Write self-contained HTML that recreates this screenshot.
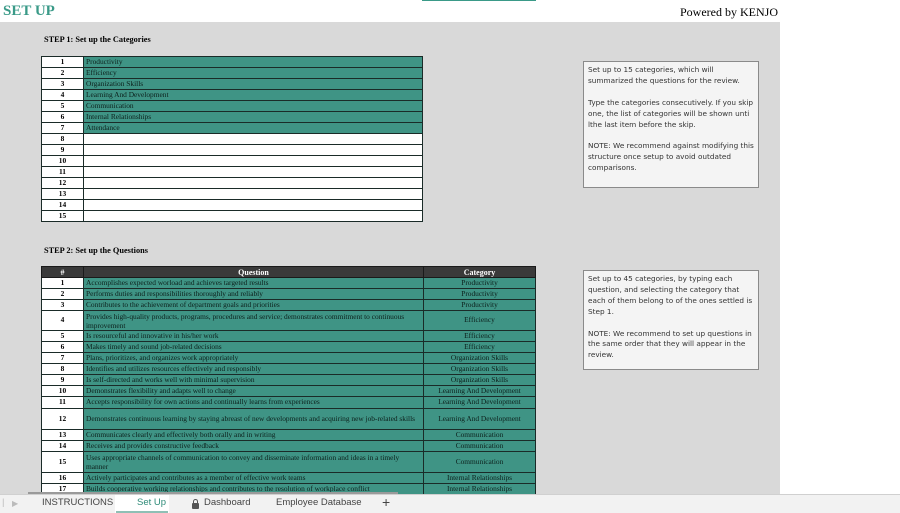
<!DOCTYPE html>
<html><head><meta charset="utf-8"><style>
*{margin:0;padding:0;box-sizing:border-box}
body{width:900px;height:513px;overflow:hidden;background:#fff;position:relative;font-family:"Liberation Serif",serif}
.hdr{position:absolute;left:0;top:0;width:780px;height:22px;background:#fff}
.title{position:absolute;left:3px;top:3px;font-size:15px;font-weight:bold;color:#3a9a88;white-space:nowrap}
.pw{position:absolute;right:2px;top:5px;font-size:12px;color:#000;white-space:nowrap}
.grey{position:absolute;left:0;top:22px;width:780px;height:472px;background:#d9d9d9}
.step{position:absolute;left:44px;font-size:8.3px;font-weight:bold;white-space:nowrap}
table{position:absolute;border-collapse:collapse;table-layout:fixed;font-size:7.4px}
td{border:1px solid #1a2b28;padding:0 2px;line-height:8.5px;overflow:hidden;white-space:nowrap}
td.n{background:#fff;text-align:center;font-weight:bold}
td.t{background:#3f9485;color:#0c1f1b}
td.e{background:#fff}
td.c{background:#3f9485;text-align:center;color:#0c1f1b}
td.w{white-space:normal;line-height:9px}
th{background:#3a3a3a;color:#fff;font-size:8px;border:1px solid #1a1a1a;height:11px}
.note{position:absolute;left:583px;width:176px;background:#f4f4f4;border:1px solid #8a8a8a;font-family:"DejaVu Sans","Liberation Sans",sans-serif;font-size:7.3px;line-height:10.9px;color:#333;padding:3px 4px}
.note p{margin-bottom:10.9px}
.tabs{position:absolute;left:0;top:494px;width:900px;height:19px;background:#f2f2f2;border-top:1px solid #d0d0d0;font-family:"Liberation Sans",sans-serif;font-size:9.5px;color:#444}
.tabs span{position:absolute;top:2px;white-space:nowrap}
</style></head><body>
<div class="hdr"><div class="title">SET UP</div><div class="pw">Powered by KENJO</div></div>
<div style="position:absolute;left:422px;top:0;width:114px;height:1px;background:#3a9a88"></div>
<div class="grey"></div>
<div class="step" style="top:35px">STEP 1: Set up the Categories</div>
<table style="left:41px;top:56px;width:382px">
<colgroup><col style="width:42px"><col></colgroup>
<tr style="height:11px"><td class="n">1</td><td class="t">Productivity</td></tr>
<tr style="height:11px"><td class="n">2</td><td class="t">Efficiency</td></tr>
<tr style="height:11px"><td class="n">3</td><td class="t">Organization Skills</td></tr>
<tr style="height:11px"><td class="n">4</td><td class="t">Learning And Development</td></tr>
<tr style="height:11px"><td class="n">5</td><td class="t">Communication</td></tr>
<tr style="height:11px"><td class="n">6</td><td class="t">Internal Relationships</td></tr>
<tr style="height:11px"><td class="n">7</td><td class="t">Attendance</td></tr>
<tr style="height:11px"><td class="n">8</td><td class="e"></td></tr>
<tr style="height:11px"><td class="n">9</td><td class="e"></td></tr>
<tr style="height:11px"><td class="n">10</td><td class="e"></td></tr>
<tr style="height:11px"><td class="n">11</td><td class="e"></td></tr>
<tr style="height:11px"><td class="n">12</td><td class="e"></td></tr>
<tr style="height:11px"><td class="n">13</td><td class="e"></td></tr>
<tr style="height:11px"><td class="n">14</td><td class="e"></td></tr>
<tr style="height:11px"><td class="n">15</td><td class="e"></td></tr>
</table>
<div class="note" style="top:61px;height:127px">
<p>Set up to 15 categories, which will summarized the questions for the review.</p>
<p>Type the categories consecutively. If you skip one, the list of categories will be shown unti lthe last item before the skip.</p>
<p>NOTE: We recommend against modifying this structure once setup to avoid outdated comparisons.</p>
</div>
<div class="step" style="top:246px">STEP 2: Set up the Questions</div>
<table style="left:41px;top:266px;width:495px">
<colgroup><col style="width:42px"><col style="width:340px"><col></colgroup>
<tr><th>#</th><th>Question</th><th>Category</th></tr>
<tr style="height:11px"><td class="n">1</td><td class="t">Accomplishes expected worload and achieves targeted results</td><td class="c">Productivity</td></tr>
<tr style="height:11px"><td class="n">2</td><td class="t">Performs duties and responsibilities thoroughly and reliably</td><td class="c">Productivity</td></tr>
<tr style="height:11px"><td class="n">3</td><td class="t">Contributes to the achievement of department goals and priorities</td><td class="c">Productivity</td></tr>
<tr style="height:20px"><td class="n">4</td><td class="t w">Provides high-quality products, programs, procedures and service; demonstrates commitment to continuous<br>improvement</td><td class="c">Efficiency</td></tr>
<tr style="height:11px"><td class="n">5</td><td class="t">Is resourceful and innovative in his/her work</td><td class="c">Efficiency</td></tr>
<tr style="height:11px"><td class="n">6</td><td class="t">Makes timely and sound job-related decisions</td><td class="c">Efficiency</td></tr>
<tr style="height:11px"><td class="n">7</td><td class="t">Plans, prioritizes, and organizes work appropriately</td><td class="c">Organization Skills</td></tr>
<tr style="height:11px"><td class="n">8</td><td class="t">Identifies and utilizes resources effectively and responsibly</td><td class="c">Organization Skills</td></tr>
<tr style="height:11px"><td class="n">9</td><td class="t">Is self-directed and works well with minimal supervision</td><td class="c">Organization Skills</td></tr>
<tr style="height:11px"><td class="n">10</td><td class="t">Demonstrates flexibility and adapts well to change</td><td class="c">Learning And Development</td></tr>
<tr style="height:12px"><td class="n">11</td><td class="t">Accepts responsibility for own actions and continually learns from experiences</td><td class="c">Learning And Development</td></tr>
<tr style="height:21px"><td class="n">12</td><td class="t">Demonstrates continuous learning by staying abreast of new developments and acquiring new job-related skills</td><td class="c">Learning And Development</td></tr>
<tr style="height:11px"><td class="n">13</td><td class="t">Communicates clearly and effectively both orally and in writing</td><td class="c">Communication</td></tr>
<tr style="height:11px"><td class="n">14</td><td class="t">Receives and provides constructive feedback</td><td class="c">Communication</td></tr>
<tr style="height:21px"><td class="n">15</td><td class="t w">Uses appropriate channels of communication to convey and disseminate information and ideas in a timely<br>manner</td><td class="c">Communication</td></tr>
<tr style="height:11px"><td class="n">16</td><td class="t">Actively participates and contributes as a member of effective work teams</td><td class="c">Internal Relationships</td></tr>
<tr style="height:11px"><td class="n">17</td><td class="t">Builds cooperative working relationships and contributes to the resolution of workplace conflict</td><td class="c">Internal Relationships</td></tr>
</table>
<div class="note" style="top:270px;height:100px">
<p>Set up to 45 categories, by typing each question, and selecting the category that each of them belong to of the ones settled is Step 1.</p>
<p>NOTE: We recommend to set up questions in the same order that they will appear in the review.</p>
</div>
<div style="position:absolute;left:28px;top:492px;width:370px;height:3px;background:#9a9a9a"></div>
<div class="tabs">
<span style="left:2px;color:#bbb">|</span><span style="left:12px;color:#bbb;font-size:8px;top:4px">&#9654;</span>
<span style="left:42px">INSTRUCTIONS</span>
<div style="position:absolute;left:115px;top:0;width:54px;height:18px;background:#fff"></div>
<span style="left:137px;color:#2e8b78">Set Up</span>
<div style="position:absolute;left:116px;top:16px;width:52px;height:2px;background:#8fbfb5"></div>
<div style="position:absolute;left:192px;top:8px;width:7px;height:6px;background:#555;border-radius:1px"></div>
<div style="position:absolute;left:193px;top:4px;width:5px;height:6px;border:1.2px solid #555;border-bottom:none;border-radius:3px 3px 0 0"></div>
<span style="left:204px">Dashboard</span>
<span style="left:276px">Employee Database</span>
<span style="left:382px;font-size:14px;top:-1px">+</span>
</div>
</body></html>
